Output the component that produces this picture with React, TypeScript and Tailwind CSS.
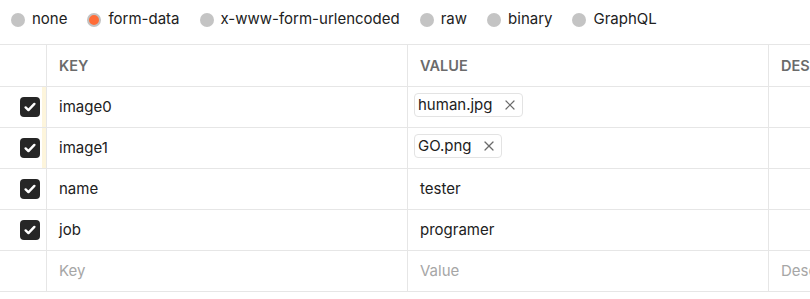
import { X } from "lucide-react";

type Row = {
    key: string;
    value: string;
    file?: boolean;
};

const modos = ["none", "form-data", "x-www-form-urlencoded", "raw", "binary", "GraphQL"];

const linhas: Row[] = [
    { key: "image0", value: "human.jpg", file: true },
    { key: "image1", value: "GO.png", file: true },
    { key: "name", value: "tester" },
    { key: "job", value: "programer" },
];

function Check() {
    return (
        <div className="w-5 h-5 rounded-[4px] bg-[#262626] flex items-center justify-center">
            <svg width="14" height="14" viewBox="0 0 16 16" fill="none">
                <path d="M3 8.5l3.2 3L13 4.5" stroke="white" strokeWidth="2.8" strokeLinecap="round" strokeLinejoin="round" />
            </svg>
        </div>
    );
}

export default function App() {
    return (
        <div className="w-[810px] h-[299px] bg-white overflow-hidden text-[15px] text-[#212121]" style={{ fontFamily: "Inter, 'Noto Sans', sans-serif" }}>

            <div className="h-[44px] flex items-center gap-[20px] pl-[11px] pb-[5px]">
                {modos.map((m) => (
                    <label key={m} className="flex items-center gap-[7px]">
                        {m === "form-data" ? (
                            <span className="w-[14px] h-[14px] rounded-full bg-[#ff6c37] border-2 border-[#c2c2c2]" />
                        ) : (
                            <span className="w-[14px] h-[14px] rounded-full bg-[#c4c4c4]" />
                        )}
                        <span>{m}</span>
                    </label>
                ))}
            </div>

            <div className="border-t border-[#e6e6e6]">
                <div className="flex h-[42px] border-b border-[#e6e6e6] text-[14.5px]">
                    <div className="w-[47px] shrink-0 border-r border-[#e6e6e6]" />
                    <div className="w-[361px] shrink-0 border-r border-[#e6e6e6] px-3 flex items-center font-semibold text-[#6b6b6b]">KEY</div>
                    <div className="w-[361px] shrink-0 border-r border-[#e6e6e6] px-3 flex items-center font-semibold text-[#6b6b6b]">VALUE</div>
                    <div className="flex-1 px-3 flex items-center font-semibold text-[#6b6b6b] whitespace-nowrap">DESCRIPTION</div>
                </div>

                {linhas.map((l) => (
                    <div key={l.key} className="flex h-[41px] border-b border-[#e6e6e6]">
                        <div className="w-[47px] shrink-0 border-r border-[#e6e6e6] flex items-center relative">
                            <div className="ml-5"><Check /></div>
                            {l.file && <div className="absolute right-0 top-0 bottom-0 w-[4px] bg-[#fdf5dc]" />}
                        </div>
                        <div className="w-[361px] shrink-0 border-r border-[#e6e6e6] px-3 flex items-center">{l.key}</div>
                        <div className={`w-[361px] shrink-0 border-r border-[#e6e6e6] flex items-center ${l.file ? "px-1.5" : "px-3"}`}>
                            {l.file ? (
                                <div className="h-6 mb-[4px] flex items-center gap-[9px] pl-[3px] pr-[4px] border border-[#e3e3e3] rounded-[4px]">
                                    <span>{l.value}</span>
                                    <X size={16} className="text-[#6b6b6b]" strokeWidth={1.8} />
                                </div>
                            ) : (
                                <span>{l.value}</span>
                            )}
                        </div>
                        <div className="flex-1" />
                    </div>
                ))}

                <div className="flex h-[41px] border-b border-[#e6e6e6] text-[#a6a6a6]">
                    <div className="w-[47px] shrink-0 border-r border-[#e6e6e6]" />
                    <div className="w-[361px] shrink-0 border-r border-[#e6e6e6] px-3 flex items-center">Key</div>
                    <div className="w-[361px] shrink-0 border-r border-[#e6e6e6] px-3 flex items-center">Value</div>
                    <div className="flex-1 px-3 flex items-center whitespace-nowrap">Description</div>
                </div>
            </div>
        </div>
    );
}
